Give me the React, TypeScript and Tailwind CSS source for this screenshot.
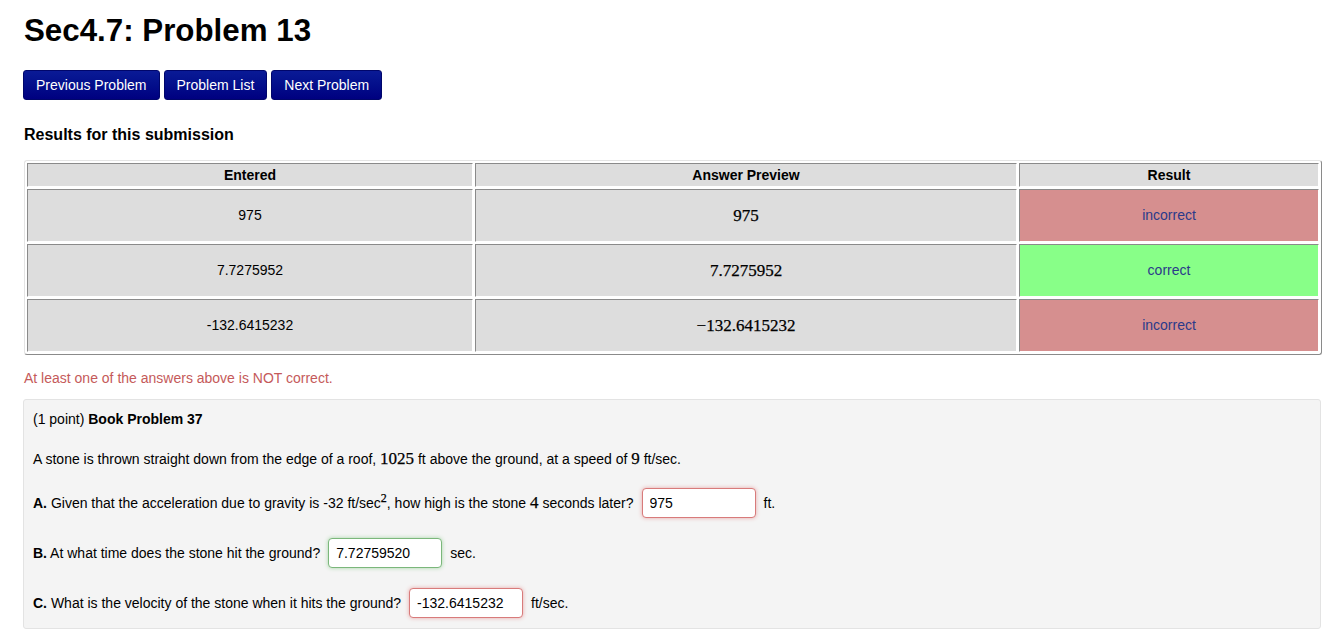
const rows = [
  { entered: "975", preview: "975", ok: false },
  { entered: "7.7275952", preview: "7.7275952", ok: true },
  { entered: "-132.6415232", preview: "\u2212132.6415232", ok: false },
];

const math = "font-['Liberation_Serif',serif] [-webkit-text-stroke:0.25px_#000]";

function AnswerBox({ value, ok }: { value: string; ok: boolean }) {
  return (
    <input
      readOnly
      value={value}
      className={`h-[30px] w-[114px] rounded-[4px] border bg-white px-[7px] text-[14px] text-black outline-none ${
        ok
          ? "border-[#7bb77b] shadow-[0_0_4px_#a9d6a9]"
          : "border-[#d87b7b] shadow-[0_0_4px_#e8a8a8]"
      }`}
    />
  );
}

const cell = "border border-t-[#8a8a8a] border-l-[#8a8a8a] border-r-white border-b-white text-center";

export default function App() {
  return (
    <div className="min-h-[638px] bg-white px-[24px] pt-[12px] font-['Liberation_Sans',Arial,sans-serif] text-black">
      <h1 className="text-[31.3px] font-bold leading-[38px]">Sec4.7: Problem 13</h1>

      <div className="-ml-px mt-[20px] flex gap-[4px]">
        {["Previous Problem", "Problem List", "Next Problem"].map((label) => (
          <button
            key={label}
            className="h-[30px] rounded-[3px] border border-[#00066b] bg-gradient-to-b from-[#0a1a96] to-[#000080] px-[12px] text-[14px] text-white"
          >
            {label}
          </button>
        ))}
      </div>

      <h2 className="mt-[25px] text-[16px] font-bold leading-[20px]">Results for this submission</h2>

      <table className="mt-[15px] w-[1298px] table-fixed border-separate border-spacing-[2px] rounded-[3px] border border-t-[#e4e4e4] border-l-[#e4e4e4] border-r-[#8a8a8a] border-b-[#8a8a8a] text-[14px]">
        <colgroup>
          <col className="w-[446px]" />
          <col className="w-[542px]" />
          <col />
        </colgroup>
        <thead>
          <tr>
            {["Entered", "Answer Preview", "Result"].map((h) => (
              <th key={h} className={`h-[24px] bg-[#dddddd] text-[14px] font-bold ${cell}`}>
                {h}
              </th>
            ))}
          </tr>
        </thead>
        <tbody>
          {rows.map((r) => (
            <tr key={r.entered}>
              <td className={`h-[53px] bg-[#dddddd] ${cell}`}>{r.entered}</td>
              <td className={`bg-[#dddddd] text-[17px] ${math} ${cell}`}>{r.preview}</td>
              <td className={`text-[#2b3a8a] ${r.ok ? "bg-[#88ff88]" : "bg-[#d68f8f]"} ${cell}`}>
                {r.ok ? "correct" : "incorrect"}
              </td>
            </tr>
          ))}
        </tbody>
      </table>

      <p className="mt-[14px] text-[14px] leading-[18px] text-[#c55a5a]">
        At least one of the answers above is NOT correct.
      </p>

      <div className="-ml-px mt-[12px] w-[1298px] rounded-[3px] border border-[#e3e3e3] bg-[#f4f4f4] px-[9px] pb-[10px] pt-[9px] text-[14px] leading-[20px]">
        <p>
          (1 point) <b>Book Problem 37</b>
        </p>
        <p className="mt-[20px]">
          A stone is thrown straight down from the edge of a roof, <span className={`text-[17px] ${math}`}>1025</span> ft above
          the ground, at a speed of <span className={`text-[17px] ${math}`}>9</span> ft/sec.
        </p>
        <div className="mt-[19px] flex items-center gap-[8px]">
          <span>
            <b>A.</b> Given that the acceleration due to gravity is -32 ft/sec
            <sup className={`text-[12px] ${math}`}>2</sup>, how high is the stone{" "}
            <span className={`text-[17px] ${math}`}>4</span> seconds later?
          </span>
          <AnswerBox value="975" ok={false} />
          <span>ft.</span>
        </div>
        <div className="mt-[20px] flex items-center gap-[8px]">
          <span>
            <b>B.</b> At what time does the stone hit the ground?
          </span>
          <AnswerBox value="7.72759520" ok />
          <span>sec.</span>
        </div>
        <div className="mt-[20px] flex items-center gap-[8px]">
          <span>
            <b>C.</b> What is the velocity of the stone when it hits the ground?
          </span>
          <AnswerBox value="-132.6415232" ok={false} />
          <span>ft/sec.</span>
        </div>
      </div>
    </div>
  );
}
